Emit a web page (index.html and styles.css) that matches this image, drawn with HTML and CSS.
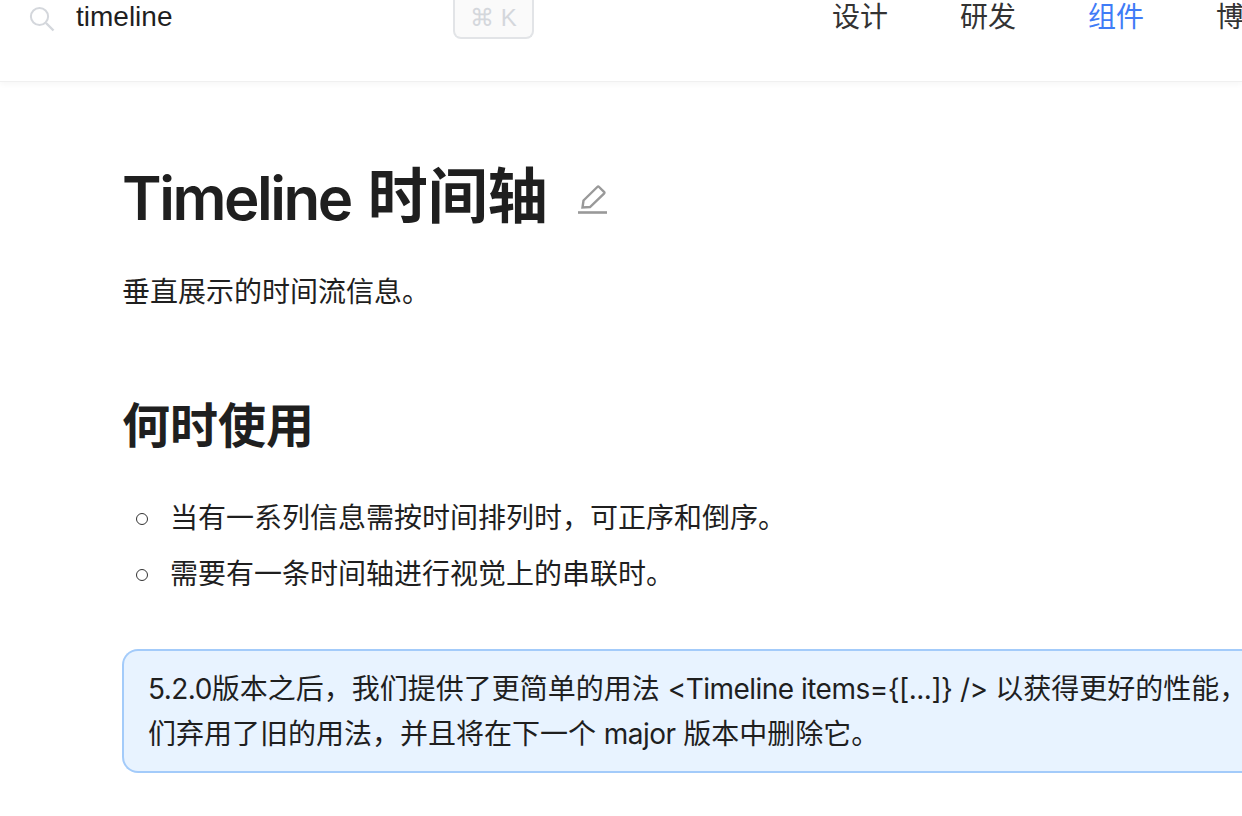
FILE: index.html
```html
<!DOCTYPE html>
<html lang="zh">
<head>
<meta charset="utf-8">
<title>Timeline 时间轴</title>
<link rel="stylesheet" href="styles.css">
</head>
<body>
<header class="header">
  <div class="search">
    <svg class="search-icon" viewBox="0 0 26 26" width="26" height="26" aria-hidden="true">
      <circle cx="10.5" cy="10.5" r="8.600" fill="none" stroke="#d4d7dc" stroke-width="2"/>
      <path d="M17 17l7.500 7.500" fill="none" stroke="#d4d7dc" stroke-width="2.400"/>
    </svg>
    <span class="search-text">timeline</span>
    <kbd class="kbd">⌘ K</kbd>
  </div>
  <nav class="nav">
    <a class="nav-item">设计</a>
    <a class="nav-item">研发</a>
    <a class="nav-item active">组件</a>
    <a class="nav-item">博客</a>
  </nav>
</header>
<main class="content">
  <h1 class="title"><span class="title-latin">Timeline</span> <span>时间轴</span><svg class="edit-icon" viewBox="0 0 30 30" width="30" height="30" aria-hidden="true"><path d="M4.500 22.500l1-7L19.300 2a1.300 1.300 0 0 1 1.800 0l4.900 4.800a1.300 1.300 0 0 1 0 1.800L12 22z" fill="none" stroke="#999" stroke-width="2.400"/><path d="M0 27.500h29" stroke="#999" stroke-width="2.600"/></svg></h1>
  <p class="lead">垂直展示的时间流信息。</p>
  <h2 class="subtitle">何时使用</h2>
  <ul class="list">
    <li>当有一系列信息需按时间排列时，可正序和倒序。</li>
    <li>需要有一条时间轴进行视觉上的串联时。</li>
  </ul>
  <div class="alert"><span class="latin">5.2.0</span>版本之后，我们提供了更简单的用法 <span class="latin">&lt;Timeline items={[...]} /&gt;</span> 以获得更好的性能，我们弃用了旧的用法，并且将在下一个 <span class="latin">major</span> 版本中删除它。</div>
</main>
</body>
</html>
```
FILE: styles.css
```css
* { box-sizing: border-box; }
html, body { margin: 0; padding: 0; height: 100%; }
body {
  width: 1242px;
  height: 816px;
  overflow: hidden;
  background: #fff;
  color: #1f1f1f;
  font-family: "Liberation Sans", "Noto Sans CJK SC", sans-serif;
}
.header {
  display: flex;
  height: 82px;
  width: 1242px;
  border-bottom: 1px solid #f0f0f0;
  box-shadow: 0 2px 6px rgba(0, 0, 0, 0.04);
}
.search {
  display: flex;
  align-items: flex-start;
  width: 832px;
  flex: none;
  padding-left: 29px;
}
.search-icon { margin-top: 6px; flex: none; }
.search-text {
  margin-left: 21px;
  width: 377px;
  font-size: 28px;
  line-height: 34px;
}
.kbd {
  width: 81px;
  height: 39px;
  border: 2px solid #e2e4e7;
  border-top: 0;
  border-radius: 0 0 8px 8px;
  background: #fafafa;
  color: #d4d7dc;
  text-align: center;
  font-family: "Liberation Sans", sans-serif;
  font-size: 24px;
  line-height: 36px;
}
.nav {
  display: flex;
  gap: 72px;
  flex: none;
  white-space: nowrap;
}
.nav-item {
  font-size: 28px;
  line-height: 35px;
  color: #333;
}
.nav-item.active { color: #3f7cf7; }
.content {
  width: 1500px;
  padding: 0 0 0 122px;
}
.title {
  display: flex;
  align-items: center;
  gap: 17px;
  margin: 79px 0 0;
  font-size: 60px;
  line-height: 74px;
  font-weight: 700;
}
.title-latin {
  font-family: Inter, sans-serif;
  font-weight: 600;
  letter-spacing: -2.450px;
}
.edit-icon { margin-left: 13px; margin-top: 3px; flex: none; }
.lead {
  margin: 36px 0 0;
  font-size: 28px;
  line-height: 44px;
}
.subtitle {
  margin: 82px 0 0;
  font-size: 48px;
  line-height: 60px;
  font-weight: 700;
}
.list {
  margin: 40px 0 0;
  padding: 0 0 0 14px;
  list-style: none;
}
.list li {
  display: flex;
  align-items: center;
  font-size: 28px;
  line-height: 44px;
  margin-bottom: 12px;
}
.list li::before {
  content: "";
  flex: none;
  width: 10px;
  height: 10px;
  margin-right: 22px;
  border: 1.500px solid #333;
  border-radius: 50%;
}
.alert {
  margin-top: 52px;
  width: 1180px;
  height: 124px;
  padding: 16px 24px;
  border: 2px solid #a3cbfa;
  border-right: 0;
  border-radius: 16px 0 0 16px;
  background: #e8f3ff;
  font-size: 28px;
  line-height: 44px;
}
.latin {
  font-family: Inter, sans-serif;
  letter-spacing: -0.520px;
}
```
